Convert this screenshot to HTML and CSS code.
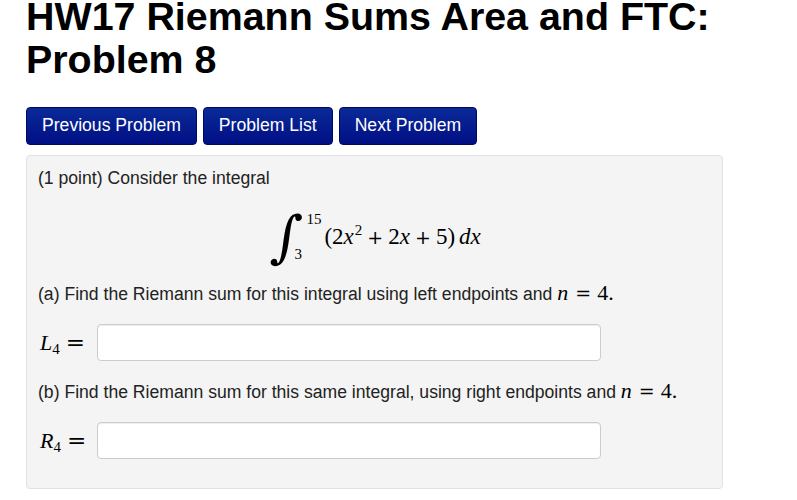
FILE: index.html
```html
<!DOCTYPE html>
<html>
<head>
<meta charset="utf-8">
<link rel="stylesheet" href="styles.css">
</head>
<body>
<div class="page">
  <h1 class="title">HW17 Riemann Sums Area and FTC: Problem 8</h1>
  <div class="nav">
    <a class="btn">Previous Problem</a>
    <a class="btn">Problem List</a>
    <a class="btn">Next Problem</a>
  </div>
  <div class="problem">
    <p class="line">(1 point) Consider the integral</p>
    <div class="display">
      <span class="int">∫</span><span class="limits"><span class="up">15</span><span class="lo">3</span></span><span class="expr">(2<i>x</i><sup>2</sup><span class="op">+</span>2<i>x</i><span class="op">+</span>5)<span class="sp"></span><i>dx</i></span>
    </div>
    <p class="line">(a) Find the Riemann sum for this integral using left endpoints and <span class="m"><i>n</i><span class="op">=</span>4.</span></p>
    <div class="answer first">
      <span class="lbl"><i>L</i><sub>4</sub><span class="op eq">=</span></span>
      <span class="field"></span>
    </div>
    <p class="line">(b) Find the Riemann sum for this same integral, using right endpoints and <span class="m"><i>n</i><span class="op">=</span>4.</span></p>
    <div class="answer last">
      <span class="lbl"><i>R</i><sub>4</sub><span class="op eq">=</span></span>
      <span class="field"></span>
    </div>
  </div>
</div>
</body>
</html>
```

FILE: styles.css
```css
html, body {
  margin: 0;
  padding: 0;
  background: #fff;
}
body {
  font-family: "Liberation Sans", Arial, sans-serif;
  font-size: 17.6px;
  color: #222;
}
.page {
  padding-left: 26px;
  width: 697px;
}
.title {
  font-size: 39.4px;
  line-height: 1.1;
  font-weight: bold;
  color: #000;
  margin: -5px 0 0 0;
}
.nav {
  display: flex;
  gap: 6px;
  margin-top: 25px;
}
.btn {
  display: inline-block;
  color: #fff;
  font-size: 17.6px;
  line-height: 23px;
  padding: 6.5px 15px;
  border: 1px solid #000a5c;
  border-radius: 4px;
  background: linear-gradient(#0a2a98, #000f84);
  white-space: nowrap;
}
.problem {
  margin-top: 10px;
  background: #f4f4f4;
  border: 1px solid #e2e2e2;
  border-radius: 4px;
  padding: 10px 11px 29px 11px;
  height: 293px;
}
.line {
  margin: 0;
  line-height: 25px;
}
.display {
  font-family: "Liberation Serif", "DejaVu Serif", serif;
  font-size: 23px;
  color: #000;
  display: flex;
  justify-content: center;
  align-items: center;
  height: 89px;
  padding-left: 4px;
}
.int {
  font-family: "DejaVu Serif", serif;
  font-size: 56px;
  line-height: 56px;
  display: inline-block;
  transform: skewX(-6deg);
  margin-top: 4px;
}
.limits {
  display: inline-flex;
  flex-direction: column;
  justify-content: space-between;
  font-size: 15px;
  height: 50px;
  margin-left: 5px;
  margin-right: 3px;
  line-height: 15px;
  margin-top: 4px;
}
.limits .lo { margin-left: -12px; }
.expr {
  margin-top: 4px;
}
.expr i, .m i, .lbl i {
  font-style: italic;
}
.expr sup {
  font-size: 15px;
  vertical-align: 9px;
  line-height: 0;
  margin-left: 1px;
}
.op {
  font-family: "DejaVu Serif", serif;
  font-size: 19px;
  margin: 0 5px;
}
.sp { display: inline-block; width: 4px; }
.m {
  font-family: "Liberation Serif", "DejaVu Serif", serif;
  font-size: 22px;
  color: #000;
}
.m .op { margin: 0 6px 0 7px; }
.answer {
  display: flex;
  align-items: center;
  margin-top: 17px;
}
.answer.first { margin-bottom: 17px; }
.lbl {
  font-family: "Liberation Serif", "DejaVu Serif", serif;
  font-size: 22px;
  color: #000;
  width: 57px;
  padding-left: 2px;
  white-space: nowrap;
}
.lbl sub {
  font-size: 15px;
  vertical-align: -4px;
  line-height: 0;
}
.lbl .eq { margin: 0 0 0 6px; font-size: 23px; }
.field {
  display: block;
  width: 502px;
  height: 35px;
  background: #fff;
  border: 1px solid #ccc;
  border-radius: 4px;
  box-shadow: inset 0 1px 1px rgba(0,0,0,0.075);
}
```
